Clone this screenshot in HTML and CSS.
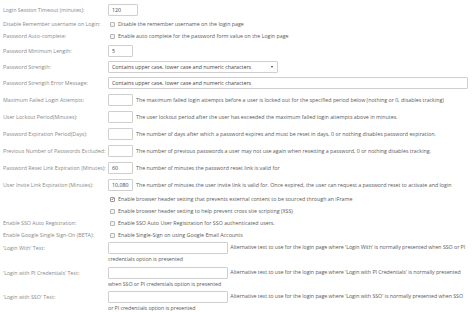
FILE: index.html
```html
<!DOCTYPE html>
<html>
<head>
<meta charset="utf-8">
<link rel="stylesheet" href="styles.css">
</head>
<body>
<div class="form">
  <div class="row row-input">
    <div class="label">Login Session Timeout (minutes):</div>
    <div class="field"><span class="box box-m">120</span></div>
  </div>
  <div class="row row-check">
    <div class="label">Disable Remember username on Login:</div>
    <div class="field"><span class="check"></span><span>Disable the remember username on the login page</span></div>
  </div>
  <div class="row row-check">
    <div class="label">Password Auto-complete:</div>
    <div class="field"><span class="check"></span><span>Enable auto complete for the password form value on the Login page</span></div>
  </div>
  <div class="row row-input">
    <div class="label">Password Minimum Length:</div>
    <div class="field"><span class="box box-s">5</span></div>
  </div>
  <div class="row row-select">
    <div class="label">Password Strength:</div>
    <div class="field"><span class="box box-select"><span>Contains upper case, lower case and numeric characters</span><span class="caret"></span></span></div>
  </div>
  <div class="row row-select">
    <div class="label">Password Strength Error Message:</div>
    <div class="field"><span class="box box-full">Contains upper case, lower case and numeric characters</span></div>
  </div>
  <div class="row row-input">
    <div class="label">Maximum Failed Login Attempts:</div>
    <div class="field"><span class="box box-s"></span><span class="desc">The maximum failed login attempts before a user is locked out for the specified period below (nothing or 0, disables tracking)</span></div>
  </div>
  <div class="row row-input">
    <div class="label">User Lockout Period(Minutes):</div>
    <div class="field"><span class="box box-s"></span><span class="desc">The user lockout period after the user has exceeded the maximum failed login attempts above in minutes.</span></div>
  </div>
  <div class="row row-input">
    <div class="label">Password Expiration Period(Days):</div>
    <div class="field"><span class="box box-s"></span><span class="desc">The number of days after which a password expires and must be reset in days, 0 or nothing disables password expiration.</span></div>
  </div>
  <div class="row row-input">
    <div class="label">Previous Number of Passwords Excluded:</div>
    <div class="field"><span class="box box-s"></span><span class="desc">The number of previous passwords a user may not use again when resetting a password, 0 or nothing disables tracking.</span></div>
  </div>
  <div class="row row-input">
    <div class="label">Password Reset Link Expiration (Minutes):</div>
    <div class="field"><span class="box box-s">60</span><span class="desc">The number of minutes the password reset link is valid for</span></div>
  </div>
  <div class="row row-input">
    <div class="label">User Invite Link Expiration (Minutes):</div>
    <div class="field"><span class="box box-s">10,080</span><span class="desc">The number of minutes the user invite link is valid for. Once expired, the user can request a password reset to activate and login</span></div>
  </div>
  <div class="row row-check">
    <div class="label"></div>
    <div class="field"><span class="check checked"><svg viewBox="0 0 4 4" width="4" height="4"><path d="M0.6 2.1 L1.6 3.1 L3.5 0.6" fill="none" stroke="#444" stroke-width="0.8"/></svg></span><span>Enable browser header setting that prevents external content to be sourced through an iFrame</span></div>
  </div>
  <div class="row row-check">
    <div class="label"></div>
    <div class="field"><span class="check"></span><span>Enable browser header setting to help prevent cross site scripting (XSS)</span></div>
  </div>
  <div class="row row-check">
    <div class="label">Enable SSO Auto Registration:</div>
    <div class="field"><span class="check"></span><span>Enable SSO Auto User Registration for SSO authenticated users.</span></div>
  </div>
  <div class="row row-check">
    <div class="label">Enable Google Single Sign-On (BETA):</div>
    <div class="field"><span class="check"></span><span>Enable Single-Sign on using Google Email Accounts</span></div>
  </div>
  <div class="row row-wide">
    <div class="label label-wide">'Login With' Text:</div>
    <div class="field field-wrap"><span class="box box-wide"></span> <span class="desc">Alternative text to use for the login page where 'Login With' is normally presented when SSO or PI credentials option is presented</span></div>
  </div>
  <div class="row row-wide">
    <div class="label label-wide">'Login with PI Credentials' Text:</div>
    <div class="field field-wrap"><span class="box box-wide"></span> <span class="desc">Alternative text to use for the login page where 'Login with PI Credentials' is normally presented when SSO or PI credentials option is presented</span></div>
  </div>
  <div class="row row-wide">
    <div class="label label-wide">'Login with SSO' Text:</div>
    <div class="field field-wrap"><span class="box box-wide"></span> <span class="desc">Alternative text to use for the login page where 'Login with SSO' is normally presented when SSO or&nbsp;PI credentials option is presented</span></div>
  </div>
</div>
</body>
</html>
```
FILE: styles.css
```css
html, body {
  margin: 0;
  background: #ffffff;
}
body {
  padding: 1px 1px 0 3px;
  font-family: "Open Sans", "DejaVu Sans", sans-serif;
  font-size: 5.3px;
  color: #666666;
  overflow: hidden;
}
.form {
  display: flex;
  flex-direction: column;
}
.row {
  display: flex;
  align-items: center;
}
.row-input { height: 17px; }
.row-check { height: 12px; }
.row-select { height: 16px; }
.row-wide {
  height: 24.5px;
  align-items: flex-start;
}
.label {
  width: 105px;
  flex: none;
  color: #8a8a8a;
  white-space: nowrap;
}
.label-wide {
  line-height: 14px;
}
.field {
  flex: 1;
  display: flex;
  align-items: center;
  gap: 3px;
  white-space: nowrap;
  color: #5a5a5a;
}
.field-wrap {
  display: block;
  white-space: normal;
  line-height: 10px;
  padding-top: 1px;
  letter-spacing: -0.05px;
}
.box {
  box-sizing: border-box;
  height: 12px;
  border: 1px solid #cfcfcf;
  border-radius: 1px;
  padding: 0 3px;
  display: inline-flex;
  align-items: center;
  color: #444444;
  background: #ffffff;
  flex: none;
}
.box-s { width: 25px; }
.box-m { width: 30px; }
.box-select {
  width: 170px;
  justify-content: space-between;
  padding-right: 4px;
}
.box-full { width: 360px; }
.box-wide {
  width: 120px;
  vertical-align: middle;
  margin-right: 1px;
}
.caret {
  width: 0;
  height: 0;
  border-left: 1.5px solid transparent;
  border-right: 1.5px solid transparent;
  border-top: 2.5px solid #333333;
}
.check {
  box-sizing: border-box;
  width: 5px;
  height: 5px;
  border: 1px solid #b5b5b5;
  border-radius: 1px;
  margin-left: 2px;
  margin-right: 0;
  flex: none;
  display: inline-flex;
  align-items: center;
  justify-content: center;
  background: #f4f4f4;
}
.check svg { display: block; }
.checked {
  border-color: #999999;
  background: #ffffff;
}
.desc {
  color: #5a5a5a;
}
```
